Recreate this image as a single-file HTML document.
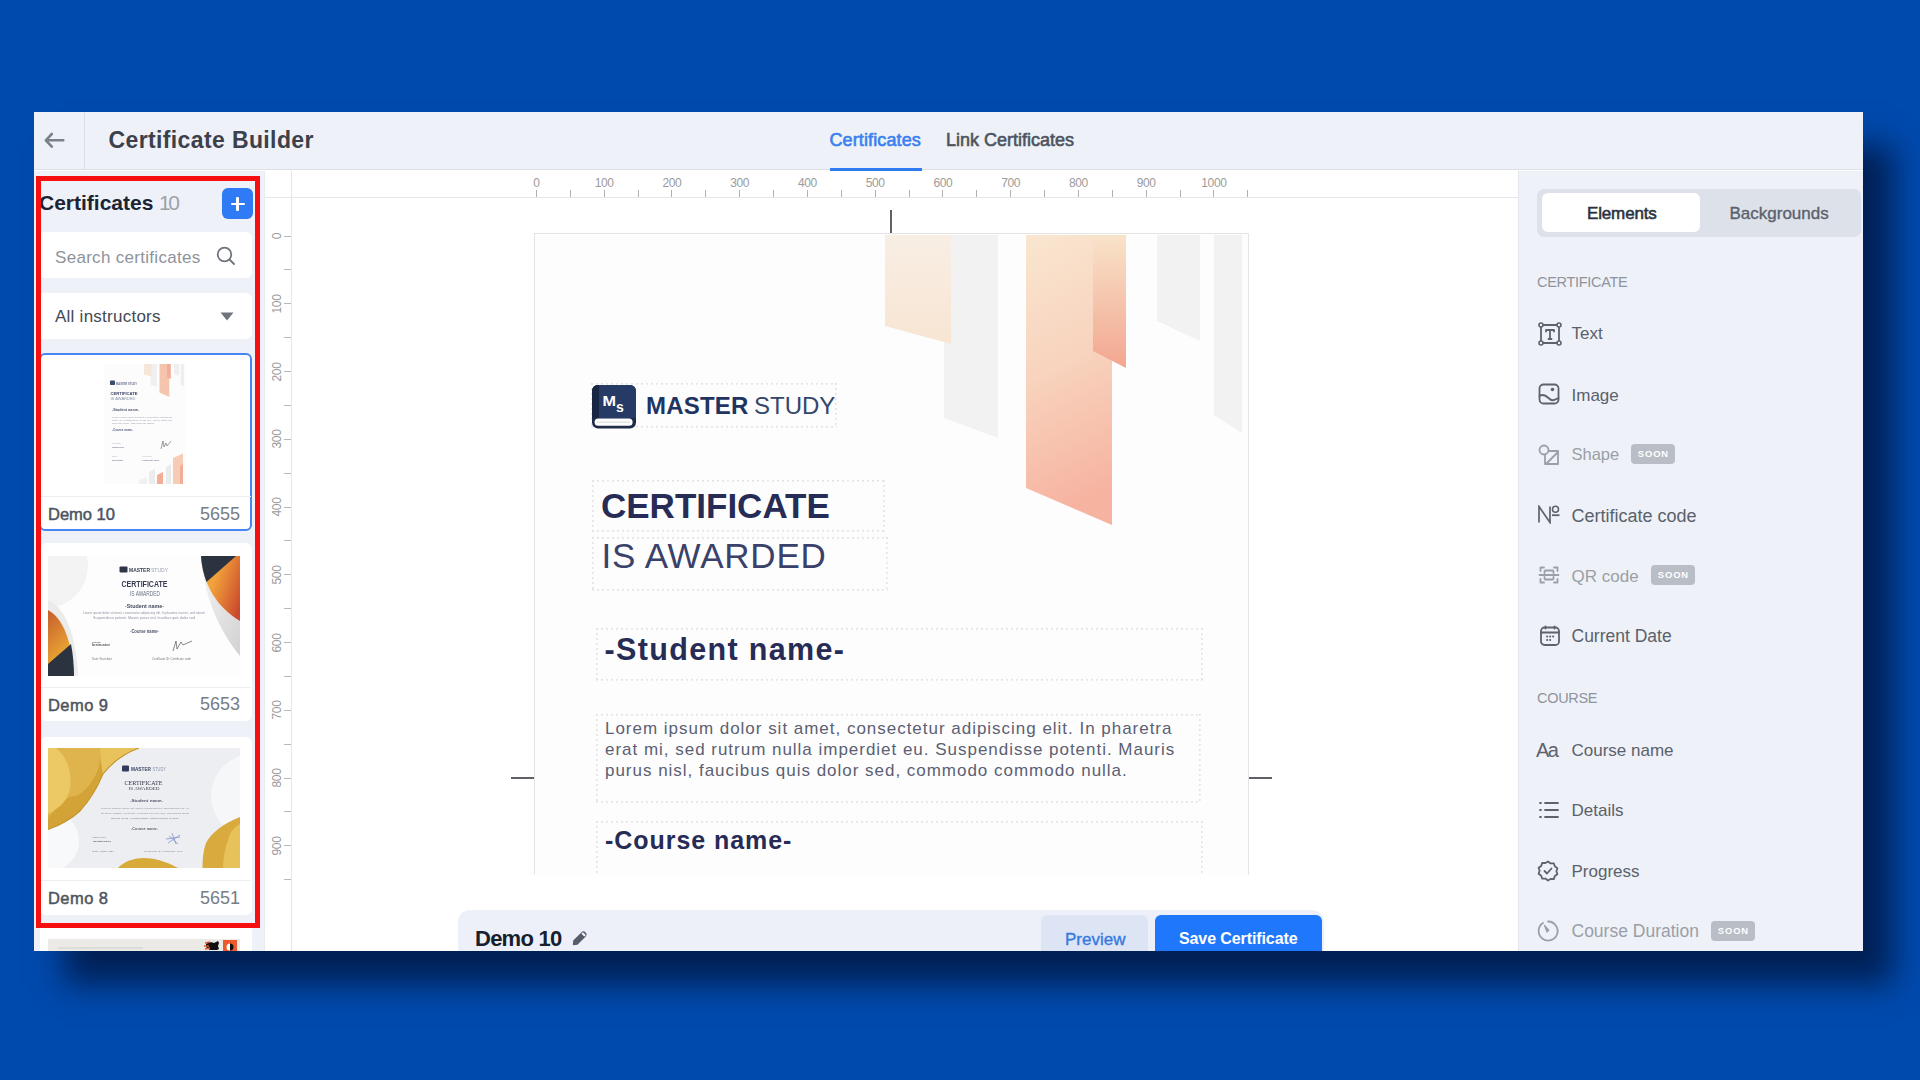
<!DOCTYPE html>
<html><head><meta charset="utf-8">
<style>
*{margin:0;padding:0;box-sizing:border-box}
html,body{width:1920px;height:1080px;overflow:hidden;background:#004aad;font-family:"Liberation Sans",sans-serif}
.abs{position:absolute}
#shadow{position:absolute;left:34px;top:112px;width:1829px;height:839px;box-shadow:30px 33px 30px rgba(0,10,40,0.66)}
#win{position:absolute;left:34px;top:112px;width:1829px;height:839px;overflow:hidden;background:#fff}
#in{position:absolute;left:-34px;top:-112px;width:1920px;height:1080px}
.t{position:absolute;white-space:nowrap;line-height:1}
</style></head><body>
<div id="shadow"></div>
<div id="win"><div id="in">
<div class="abs" style="left:34px;top:112px;width:1829px;height:58px;background:#eef1f8;border-bottom:1px solid #dcdfe6"></div>
<div class="abs" style="left:84px;top:112px;width:1px;height:58px;background:#dcdfe6"></div>
<svg class="abs" style="left:43px;top:131px" width="24" height="18" viewBox="0 0 24 18"><path d="M20.3 9.3H3M8.8 3L2.8 9.3l6 6.3" fill="none" stroke="#7b818a" stroke-width="2.6" stroke-linecap="round" stroke-linejoin="round"/></svg>
<div class="t" style="left:108.5px;top:129.0px;font-size:23px;font-weight:700;color:#3b404b;letter-spacing:0.38px;">Certificate Builder</div>
<div class="t" style="left:829.5px;top:130.5px;font-size:18px;font-weight:400;color:#3a80ef;letter-spacing:0.12px;-webkit-text-stroke:0.6px #3a80ef">Certificates</div>
<div class="abs" style="left:829.5px;top:168px;width:92px;height:2.5px;background:#2f7cf0"></div>
<div class="t" style="left:946px;top:130.5px;font-size:18px;font-weight:400;color:#4d535f;letter-spacing:0px;-webkit-text-stroke:0.6px #4d535f">Link Certificates</div>
<div class="abs" style="left:34px;top:171px;width:230px;height:800px;background:#eef1f8"></div>
<div class="abs" style="left:264px;top:171px;width:1254px;height:800px;background:#fff"></div>
<div class="abs" style="left:264px;top:197px;width:1254px;height:1px;background:#e6e6e8"></div>
<div class="abs" style="left:291px;top:171px;width:1px;height:800px;background:#e6e6e8"></div>
<div class="abs" style="left:264px;top:171px;width:1px;height:800px;background:#e9ebf0"></div>
<div class="abs" style="left:535.9px;top:190px;width:1px;height:7px;background:#b0b0b0"></div>
<div class="t" style="left:506.4px;width:60px;text-align:center;top:176.8px;font-size:12px;color:#9b9b9b;letter-spacing:-0.4px">0</div>
<div class="abs" style="left:569.8px;top:190px;width:1px;height:7px;background:#b0b0b0"></div>
<div class="abs" style="left:603.6px;top:190px;width:1px;height:7px;background:#b0b0b0"></div>
<div class="t" style="left:574.1px;width:60px;text-align:center;top:176.8px;font-size:12px;color:#9b9b9b;letter-spacing:-0.4px">100</div>
<div class="abs" style="left:637.5px;top:190px;width:1px;height:7px;background:#b0b0b0"></div>
<div class="abs" style="left:671.4px;top:190px;width:1px;height:7px;background:#b0b0b0"></div>
<div class="t" style="left:641.9px;width:60px;text-align:center;top:176.8px;font-size:12px;color:#9b9b9b;letter-spacing:-0.4px">200</div>
<div class="abs" style="left:705.3px;top:190px;width:1px;height:7px;background:#b0b0b0"></div>
<div class="abs" style="left:739.1px;top:190px;width:1px;height:7px;background:#b0b0b0"></div>
<div class="t" style="left:709.6px;width:60px;text-align:center;top:176.8px;font-size:12px;color:#9b9b9b;letter-spacing:-0.4px">300</div>
<div class="abs" style="left:773.0px;top:190px;width:1px;height:7px;background:#b0b0b0"></div>
<div class="abs" style="left:806.9px;top:190px;width:1px;height:7px;background:#b0b0b0"></div>
<div class="t" style="left:777.4px;width:60px;text-align:center;top:176.8px;font-size:12px;color:#9b9b9b;letter-spacing:-0.4px">400</div>
<div class="abs" style="left:840.8px;top:190px;width:1px;height:7px;background:#b0b0b0"></div>
<div class="abs" style="left:874.6px;top:190px;width:1px;height:7px;background:#b0b0b0"></div>
<div class="t" style="left:845.1px;width:60px;text-align:center;top:176.8px;font-size:12px;color:#9b9b9b;letter-spacing:-0.4px">500</div>
<div class="abs" style="left:908.5px;top:190px;width:1px;height:7px;background:#b0b0b0"></div>
<div class="abs" style="left:942.4px;top:190px;width:1px;height:7px;background:#b0b0b0"></div>
<div class="t" style="left:912.9px;width:60px;text-align:center;top:176.8px;font-size:12px;color:#9b9b9b;letter-spacing:-0.4px">600</div>
<div class="abs" style="left:976.3px;top:190px;width:1px;height:7px;background:#b0b0b0"></div>
<div class="abs" style="left:1010.1px;top:190px;width:1px;height:7px;background:#b0b0b0"></div>
<div class="t" style="left:980.6px;width:60px;text-align:center;top:176.8px;font-size:12px;color:#9b9b9b;letter-spacing:-0.4px">700</div>
<div class="abs" style="left:1044.0px;top:190px;width:1px;height:7px;background:#b0b0b0"></div>
<div class="abs" style="left:1077.9px;top:190px;width:1px;height:7px;background:#b0b0b0"></div>
<div class="t" style="left:1048.4px;width:60px;text-align:center;top:176.8px;font-size:12px;color:#9b9b9b;letter-spacing:-0.4px">800</div>
<div class="abs" style="left:1111.8px;top:190px;width:1px;height:7px;background:#b0b0b0"></div>
<div class="abs" style="left:1145.7px;top:190px;width:1px;height:7px;background:#b0b0b0"></div>
<div class="t" style="left:1116.2px;width:60px;text-align:center;top:176.8px;font-size:12px;color:#9b9b9b;letter-spacing:-0.4px">900</div>
<div class="abs" style="left:1179.5px;top:190px;width:1px;height:7px;background:#b0b0b0"></div>
<div class="abs" style="left:1213.4px;top:190px;width:1px;height:7px;background:#b0b0b0"></div>
<div class="t" style="left:1183.9px;width:60px;text-align:center;top:176.8px;font-size:12px;color:#9b9b9b;letter-spacing:-0.4px">1000</div>
<div class="abs" style="left:1247.3px;top:190px;width:1px;height:7px;background:#b0b0b0"></div>
<div class="abs" style="left:284px;top:235.5px;width:7px;height:1px;background:#b8b8b8"></div>
<div class="t" style="left:247.3px;top:230.0px;width:60px;height:12px;line-height:12px;text-align:center;font-size:12px;color:#9b9b9b;letter-spacing:-0.4px;transform-origin:30px 6px;transform:rotate(-90deg)">0</div>
<div class="abs" style="left:284px;top:269.4px;width:7px;height:1px;background:#b8b8b8"></div>
<div class="abs" style="left:284px;top:303.2px;width:7px;height:1px;background:#b8b8b8"></div>
<div class="t" style="left:247.3px;top:297.8px;width:60px;height:12px;line-height:12px;text-align:center;font-size:12px;color:#9b9b9b;letter-spacing:-0.4px;transform-origin:30px 6px;transform:rotate(-90deg)">100</div>
<div class="abs" style="left:284px;top:337.1px;width:7px;height:1px;background:#b8b8b8"></div>
<div class="abs" style="left:284px;top:371.0px;width:7px;height:1px;background:#b8b8b8"></div>
<div class="t" style="left:247.3px;top:365.5px;width:60px;height:12px;line-height:12px;text-align:center;font-size:12px;color:#9b9b9b;letter-spacing:-0.4px;transform-origin:30px 6px;transform:rotate(-90deg)">200</div>
<div class="abs" style="left:284px;top:404.9px;width:7px;height:1px;background:#b8b8b8"></div>
<div class="abs" style="left:284px;top:438.8px;width:7px;height:1px;background:#b8b8b8"></div>
<div class="t" style="left:247.3px;top:433.2px;width:60px;height:12px;line-height:12px;text-align:center;font-size:12px;color:#9b9b9b;letter-spacing:-0.4px;transform-origin:30px 6px;transform:rotate(-90deg)">300</div>
<div class="abs" style="left:284px;top:472.6px;width:7px;height:1px;background:#b8b8b8"></div>
<div class="abs" style="left:284px;top:506.5px;width:7px;height:1px;background:#b8b8b8"></div>
<div class="t" style="left:247.3px;top:501.0px;width:60px;height:12px;line-height:12px;text-align:center;font-size:12px;color:#9b9b9b;letter-spacing:-0.4px;transform-origin:30px 6px;transform:rotate(-90deg)">400</div>
<div class="abs" style="left:284px;top:540.4px;width:7px;height:1px;background:#b8b8b8"></div>
<div class="abs" style="left:284px;top:574.2px;width:7px;height:1px;background:#b8b8b8"></div>
<div class="t" style="left:247.3px;top:568.8px;width:60px;height:12px;line-height:12px;text-align:center;font-size:12px;color:#9b9b9b;letter-spacing:-0.4px;transform-origin:30px 6px;transform:rotate(-90deg)">500</div>
<div class="abs" style="left:284px;top:608.1px;width:7px;height:1px;background:#b8b8b8"></div>
<div class="abs" style="left:284px;top:642.0px;width:7px;height:1px;background:#b8b8b8"></div>
<div class="t" style="left:247.3px;top:636.5px;width:60px;height:12px;line-height:12px;text-align:center;font-size:12px;color:#9b9b9b;letter-spacing:-0.4px;transform-origin:30px 6px;transform:rotate(-90deg)">600</div>
<div class="abs" style="left:284px;top:675.9px;width:7px;height:1px;background:#b8b8b8"></div>
<div class="abs" style="left:284px;top:709.8px;width:7px;height:1px;background:#b8b8b8"></div>
<div class="t" style="left:247.3px;top:704.2px;width:60px;height:12px;line-height:12px;text-align:center;font-size:12px;color:#9b9b9b;letter-spacing:-0.4px;transform-origin:30px 6px;transform:rotate(-90deg)">700</div>
<div class="abs" style="left:284px;top:743.6px;width:7px;height:1px;background:#b8b8b8"></div>
<div class="abs" style="left:284px;top:777.5px;width:7px;height:1px;background:#b8b8b8"></div>
<div class="t" style="left:247.3px;top:772.0px;width:60px;height:12px;line-height:12px;text-align:center;font-size:12px;color:#9b9b9b;letter-spacing:-0.4px;transform-origin:30px 6px;transform:rotate(-90deg)">800</div>
<div class="abs" style="left:284px;top:811.4px;width:7px;height:1px;background:#b8b8b8"></div>
<div class="abs" style="left:284px;top:845.2px;width:7px;height:1px;background:#b8b8b8"></div>
<div class="t" style="left:247.3px;top:839.8px;width:60px;height:12px;line-height:12px;text-align:center;font-size:12px;color:#9b9b9b;letter-spacing:-0.4px;transform-origin:30px 6px;transform:rotate(-90deg)">900</div>
<div class="abs" style="left:284px;top:879.1px;width:7px;height:1px;background:#b8b8b8"></div>
<div class="abs" style="left:534px;top:233px;width:715px;height:642px;background:#fdfdfd;border:1px solid #e4e4e4;border-bottom:none;overflow:hidden">
<svg class="abs" style="left:0;top:0" width="715" height="642"><defs><linearGradient id="g1" x1="0" y1="0" x2="0" y2="1"><stop offset="0" stop-color="#f8eee4"/><stop offset="1" stop-color="#f8e5d3"/></linearGradient><linearGradient id="g2" x1="0" y1="0" x2="0.15" y2="1"><stop offset="0" stop-color="#f9e6d0"/><stop offset="0.5" stop-color="#f8d3bd"/><stop offset="1" stop-color="#f6b3a0"/></linearGradient><linearGradient id="g3" x1="0" y1="0" x2="0" y2="1"><stop offset="0" stop-color="#f8e3c9"/><stop offset="1" stop-color="#f3a690"/></linearGradient></defs><polygon points="409.0,1.0 463.0,1.0 463.0,204.0 409.0,184.0" fill="#f2f2f2"/><polygon points="350.0,1.0 416.0,1.0 416.0,110.0 350.0,92.0" fill="url(#g1)"/><polygon points="491.0,1.0 577.0,1.0 577.0,291.0 491.0,254.0" fill="url(#g2)"/><polygon points="558.0,1.0 591.0,1.0 591.0,134.0 558.0,117.0" fill="url(#g3)"/><polygon points="622.0,1.0 665.0,1.0 665.0,107.0 622.0,87.0" fill="#f2f2f2"/><polygon points="679.0,1.0 707.0,1.0 707.0,199.0 679.0,181.0" fill="#f2f2f2"/></svg>
</div>
<div class="abs" style="left:890px;top:210px;width:1.5px;height:23px;background:#5f6166"></div>
<div class="abs" style="left:511px;top:777px;width:23px;height:1.5px;background:#5f6166"></div>
<div class="abs" style="left:1249px;top:777px;width:23px;height:1.5px;background:#5f6166"></div>
<div class="abs" style="left:591px;top:383px;width:246px;height:45px;background:repeating-linear-gradient(90deg,#e3e3e8 0 2px,transparent 2px 5px) left top/100% 1.6px no-repeat,repeating-linear-gradient(90deg,#e3e3e8 0 2px,transparent 2px 5px) left bottom/100% 1.6px no-repeat,repeating-linear-gradient(180deg,#e3e3e8 0 2px,transparent 2px 5px) left top/1.6px 100% no-repeat,repeating-linear-gradient(180deg,#e3e3e8 0 2px,transparent 2px 5px) right top/1.6px 100% no-repeat"></div>
<svg class="abs" style="left:592px;top:384.5px" width="44" height="44" viewBox="0 0 44 44"><rect x="0" y="0" width="44" height="43.5" rx="6" fill="#1f2b48"/><path d="M6 0h32a6 6 0 0 1 6 6v27H0V6a6 6 0 0 1 6-6z" fill="#253a64"/><path d="M6 0h1v33H0V6a6 6 0 0 1 6-6z" fill="#182643"/><rect x="2.6" y="33.5" width="38" height="7.3" rx="3.6" fill="#fdfdfd"/><rect x="5" y="36.6" width="33" height="1.1" fill="#d9dadc"/><text x="10.5" y="21.3" font-family="Liberation Sans" font-weight="700" font-size="15.5" fill="#fff" textLength="13.5" lengthAdjust="spacingAndGlyphs">M</text><text x="24" y="27.3" font-family="Liberation Sans" font-weight="700" font-size="14" fill="#fff">s</text></svg>
<div class="t" style="left:646px;top:394.1px;font-size:24px;font-weight:700;color:#1f3460;letter-spacing:0.2px;">MASTER</div>
<div class="t" style="left:754px;top:394.1px;font-size:24px;font-weight:400;color:#34466a;letter-spacing:0px;">STUDY</div>
<div class="abs" style="left:592px;top:480px;width:293px;height:52px;background:repeating-linear-gradient(90deg,#e3e3e8 0 2px,transparent 2px 5px) left top/100% 1.6px no-repeat,repeating-linear-gradient(90deg,#e3e3e8 0 2px,transparent 2px 5px) left bottom/100% 1.6px no-repeat,repeating-linear-gradient(180deg,#e3e3e8 0 2px,transparent 2px 5px) left top/1.6px 100% no-repeat,repeating-linear-gradient(180deg,#e3e3e8 0 2px,transparent 2px 5px) right top/1.6px 100% no-repeat"></div>
<div class="abs" style="left:592px;top:537px;width:296px;height:54px;background:repeating-linear-gradient(90deg,#e3e3e8 0 2px,transparent 2px 5px) left top/100% 1.6px no-repeat,repeating-linear-gradient(90deg,#e3e3e8 0 2px,transparent 2px 5px) left bottom/100% 1.6px no-repeat,repeating-linear-gradient(180deg,#e3e3e8 0 2px,transparent 2px 5px) left top/1.6px 100% no-repeat,repeating-linear-gradient(180deg,#e3e3e8 0 2px,transparent 2px 5px) right top/1.6px 100% no-repeat"></div>
<div class="t" style="left:601px;top:487.8px;font-size:35px;font-weight:700;color:#262c55;letter-spacing:0px;">CERTIFICATE</div>
<div class="t" style="left:601.5px;top:537.8px;font-size:35px;font-weight:400;color:#3a416a;letter-spacing:0.8px;">IS AWARDED</div>
<div class="abs" style="left:596px;top:628px;width:607px;height:53px;background:repeating-linear-gradient(90deg,#e3e3e8 0 2px,transparent 2px 5px) left top/100% 1.6px no-repeat,repeating-linear-gradient(90deg,#e3e3e8 0 2px,transparent 2px 5px) left bottom/100% 1.6px no-repeat,repeating-linear-gradient(180deg,#e3e3e8 0 2px,transparent 2px 5px) left top/1.6px 100% no-repeat,repeating-linear-gradient(180deg,#e3e3e8 0 2px,transparent 2px 5px) right top/1.6px 100% no-repeat"></div>
<div class="t" style="left:604.5px;top:633.6px;font-size:30.5px;font-weight:700;color:#262c55;letter-spacing:1.35px;">-Student name-</div>
<div class="abs" style="left:596px;top:714px;width:605px;height:89px;background:repeating-linear-gradient(90deg,#e3e3e8 0 2px,transparent 2px 5px) left top/100% 1.6px no-repeat,repeating-linear-gradient(90deg,#e3e3e8 0 2px,transparent 2px 5px) left bottom/100% 1.6px no-repeat,repeating-linear-gradient(180deg,#e3e3e8 0 2px,transparent 2px 5px) left top/1.6px 100% no-repeat,repeating-linear-gradient(180deg,#e3e3e8 0 2px,transparent 2px 5px) right top/1.6px 100% no-repeat"></div>
<div class="t" style="left:605px;top:719.5px;font-size:17px;font-weight:400;color:#5b6073;letter-spacing:0.98px;">Lorem ipsum dolor sit amet, consectetur adipiscing elit. In pharetra</div>
<div class="t" style="left:605px;top:741.0px;font-size:17px;font-weight:400;color:#5b6073;letter-spacing:0.98px;">erat mi, sed rutrum nulla imperdiet eu. Suspendisse potenti. Mauris</div>
<div class="t" style="left:605px;top:762.2px;font-size:17px;font-weight:400;color:#5b6073;letter-spacing:0.98px;">purus nisl, faucibus quis dolor sed, commodo commodo nulla.</div>
<div class="abs" style="left:596px;top:821px;width:607px;height:80px;background:repeating-linear-gradient(90deg,#e3e3e8 0 2px,transparent 2px 5px) left top/100% 1.6px no-repeat,repeating-linear-gradient(90deg,#e3e3e8 0 2px,transparent 2px 5px) left bottom/100% 1.6px no-repeat,repeating-linear-gradient(180deg,#e3e3e8 0 2px,transparent 2px 5px) left top/1.6px 100% no-repeat,repeating-linear-gradient(180deg,#e3e3e8 0 2px,transparent 2px 5px) right top/1.6px 100% no-repeat"></div>
<div class="t" style="left:605px;top:827.5px;font-size:25px;font-weight:700;color:#262c55;letter-spacing:0.95px;">-Course name-</div>
<div class="abs" style="left:500px;top:875px;width:800px;height:40px;background:#fff"></div>
<div class="abs" style="left:458px;top:910px;width:866px;height:80px;background:#edf0f8;border-radius:12px"></div>
<div class="t" style="left:475px;top:928.0px;font-size:22px;font-weight:700;color:#16202e;letter-spacing:-0.75px;">Demo 10</div>
<svg class="abs" style="left:570px;top:930.5px" width="17" height="17" viewBox="0 0 17 17"><g transform="rotate(45 8.5 8.5)"><path d="M5.5 1.5a3 3 0 0 1 6 0V13l-3 3.5-3-3.5z" fill="#575d68"/><rect x="6.3" y="0.2" width="4.4" height="2.2" rx="1" fill="#f3f5fa"/></g></svg>
<div class="abs" style="left:1041px;top:915px;width:107px;height:60px;background:#dde5f5;border-radius:6px"></div>
<div class="t" style="left:1065px;top:930.5px;font-size:17px;font-weight:400;color:#3579e0;letter-spacing:0px;-webkit-text-stroke:0.35px #3579e0">Preview</div>
<div class="abs" style="left:1155px;top:914.5px;width:167px;height:60px;background:#1f78fb;border-radius:6px"></div>
<div class="t" style="left:1179px;top:931.4px;font-size:16px;font-weight:700;color:#ffffff;letter-spacing:-0.1px;">Save Certificate</div>
<div class="abs" style="left:1518px;top:171px;width:345px;height:800px;background:#eef1f8;border-left:1px solid #e4e7ee"></div>
<div class="abs" style="left:1537px;top:188.5px;width:324px;height:48px;background:#dde1ea;border-radius:7px"></div>
<div class="abs" style="left:1542px;top:193px;width:157.5px;height:39px;background:#fff;border-radius:6px"></div>
<div class="t" style="left:1587px;top:204.5px;font-size:17px;font-weight:400;color:#2b3140;letter-spacing:0px;-webkit-text-stroke:0.55px #2b3140;letter-spacing:-0.15px">Elements</div>
<div class="t" style="left:1729.5px;top:204.5px;font-size:17px;font-weight:400;color:#5a616d;letter-spacing:0px;-webkit-text-stroke:0.35px #5a616d">Backgrounds</div>
<div class="t" style="left:1537px;top:275.4px;font-size:14.5px;font-weight:400;color:#8f949c;letter-spacing:-0.3px;">CERTIFICATE</div>
<div class="t" style="left:1537px;top:690.6px;font-size:14.5px;font-weight:400;color:#8f949c;letter-spacing:-0.3px;">COURSE</div>
<div class="t" style="left:1571.5px;top:324.6px;font-size:17px;font-weight:400;color:#5b616b;letter-spacing:0px;">Text</div>
<div class="t" style="left:1571.5px;top:386.8px;font-size:17px;font-weight:400;color:#5b616b;letter-spacing:0px;">Image</div>
<div class="t" style="left:1571.5px;top:446.3px;font-size:16.5px;font-weight:400;color:#9a9fa6;letter-spacing:0px;">Shape</div>
<div class="t" style="left:1571.5px;top:507.3px;font-size:18px;font-weight:400;color:#5b616b;letter-spacing:0px;">Certificate code</div>
<div class="t" style="left:1571.5px;top:568.3px;font-size:17px;font-weight:400;color:#9a9fa6;letter-spacing:0px;">QR code</div>
<div class="t" style="left:1571.5px;top:627.9px;font-size:17.5px;font-weight:400;color:#5b616b;letter-spacing:0px;">Current Date</div>
<div class="t" style="left:1571.5px;top:742.1px;font-size:17px;font-weight:400;color:#5b616b;letter-spacing:0px;">Course name</div>
<div class="t" style="left:1571.5px;top:801.5px;font-size:17px;font-weight:400;color:#5b616b;letter-spacing:0px;">Details</div>
<div class="t" style="left:1571.5px;top:863.0px;font-size:17px;font-weight:400;color:#5b616b;letter-spacing:0px;">Progress</div>
<div class="t" style="left:1571.5px;top:922.6px;font-size:17.5px;font-weight:400;color:#9a9fa6;letter-spacing:0px;">Course Duration</div>
<div class="abs" style="left:1631px;top:444px;width:44px;height:20px;background:#b9bdc5;border-radius:4px;color:#fff;font-size:9.4px;font-weight:700;line-height:20.3px;text-align:center;letter-spacing:0.9px;padding-left:0.9px">SOON</div>
<div class="abs" style="left:1651px;top:565px;width:44px;height:20px;background:#b9bdc5;border-radius:4px;color:#fff;font-size:9.4px;font-weight:700;line-height:20.3px;text-align:center;letter-spacing:0.9px;padding-left:0.9px">SOON</div>
<div class="abs" style="left:1711px;top:921px;width:44px;height:20px;background:#b9bdc5;border-radius:4px;color:#fff;font-size:9.4px;font-weight:700;line-height:20.3px;text-align:center;letter-spacing:0.9px;padding-left:0.9px">SOON</div>
<svg class="abs" style="left:1537.5px;top:321.5px" width="24" height="24" viewBox="0 0 24 24"><rect x="3" y="3" width="18" height="18" fill="none" stroke="#5d636d" stroke-width="1.8" stroke-linecap="round" stroke-linejoin="round"/><circle cx="3" cy="3" r="2" fill="#eef1f8" stroke="#5d636d" stroke-width="1.6"/><circle cx="21" cy="3" r="2" fill="#eef1f8" stroke="#5d636d" stroke-width="1.6"/><circle cx="3" cy="21" r="2" fill="#eef1f8" stroke="#5d636d" stroke-width="1.6"/><circle cx="21" cy="21" r="2" fill="#eef1f8" stroke="#5d636d" stroke-width="1.6"/><path d="M8 8h8M12 8v9M10.5 17h3M8 8v1.5M16 8v1.5" fill="none" stroke="#5d636d" stroke-width="1.8" stroke-linecap="round" stroke-linejoin="round"/></svg>
<svg class="abs" style="left:1537px;top:382px" width="24" height="24" viewBox="0 0 24 24"><rect x="2.5" y="2.5" width="19" height="19" rx="4" fill="none" stroke="#5d636d" stroke-width="1.8" stroke-linecap="round" stroke-linejoin="round"/><path d="M2.5 14c3-2 6-1 9 2s5 3 10 0" fill="none" stroke="#5d636d" stroke-width="1.8" stroke-linecap="round" stroke-linejoin="round"/><circle cx="15.5" cy="7.5" r="1.8" fill="#5d636d"/></svg>
<svg class="abs" style="left:1537px;top:443px" width="24" height="24" viewBox="0 0 24 24"><circle cx="7" cy="7" r="4.5" fill="none" stroke="#9aa0a7" stroke-width="1.8" stroke-linecap="round" stroke-linejoin="round"/><path d="M12 8l9 0 0 13-13 0 0-9" fill="none" stroke="#9aa0a7" stroke-width="1.8" stroke-linecap="round" stroke-linejoin="round"/><path d="M9 21l12-12" fill="none" stroke="#9aa0a7" stroke-width="1.8" stroke-linecap="round" stroke-linejoin="round"/></svg>
<svg class="abs" style="left:1537px;top:505px" width="24" height="19" viewBox="0 0 24 19"><path d="M2 17.5V1.5l11 16V1.5" fill="none" stroke="#5d636d" stroke-width="1.7" stroke-linejoin="miter"/><circle cx="18.5" cy="4.3" r="3" fill="none" stroke="#5d636d" stroke-width="1.6"/><rect x="15" y="9.3" width="7.5" height="1.8" fill="#5d636d"/></svg>
<svg class="abs" style="left:1537px;top:563px" width="24" height="24" viewBox="0 0 24 24"><path d="M3.5 8V4.5h3.5M17 4.5h3.5V8M20.5 16v3.5H17M7 19.5H3.5V16M2.5 12h19M7.5 10V8.5a1 1 0 0 1 1-1h7a1 1 0 0 1 1 1V10M7.5 14v1.5a1 1 0 0 0 1 1h7a1 1 0 0 0 1-1V14" fill="none" stroke="#9aa0a7" stroke-width="1.8" stroke-linecap="round" stroke-linejoin="round"/></svg>
<svg class="abs" style="left:1537.5px;top:624px" width="24" height="24" viewBox="0 0 24 24"><rect x="3" y="3.5" width="18" height="17.5" rx="3.5" fill="none" stroke="#5d636d" stroke-width="1.8" stroke-linecap="round" stroke-linejoin="round"/><path d="M3 8.5h18M7.5 2.5v2M16.5 2.5v2" fill="none" stroke="#5d636d" stroke-width="1.8" stroke-linecap="round" stroke-linejoin="round"/><path d="M9 12.5h.3M12 12.5h.3M15 12.5h.3M9 16h.3M12 16h.3" fill="none" stroke="#5d636d" stroke-width="1.8" stroke-linecap="round" stroke-linejoin="round"/></svg>
<div class="t" style="left:1536px;top:740.0px;font-size:20px;font-weight:400;color:#5d636d;letter-spacing:-1.5px;">Aa</div>
<svg class="abs" style="left:1537px;top:798px" width="24" height="24" viewBox="0 0 24 24"><path d="M8 5h13M8 12h13M8 19h13M3 5h1M3 12h1M3 19h1" fill="none" stroke="#5d636d" stroke-width="1.8" stroke-linecap="round" stroke-linejoin="round"/></svg>
<svg class="abs" style="left:1536px;top:859px" width="24" height="24" viewBox="0 0 24 24"><path d="M12 2.5l2.6 1.9 3.2-.1 1 3 2.6 1.9-1 3 1 3-2.6 1.9-1 3-3.2-.1L12 21.5l-2.6-1.9-3.2.1-1-3L2.6 14.8l1-3-1-3 2.6-1.9 1-3 3.2.1z" fill="none" stroke="#5d636d" stroke-width="1.8" stroke-linecap="round" stroke-linejoin="round"/><path d="M8.5 12l2.5 2.5 4.5-5" fill="none" stroke="#5d636d" stroke-width="1.8" stroke-linecap="round" stroke-linejoin="round"/></svg>
<svg class="abs" style="left:1536px;top:919px" width="24" height="24" viewBox="0 0 24 24"><path d="M7 4A9.5 9.5 0 1 0 12 2.5" fill="none" stroke="#9aa0a7" stroke-width="1.8" stroke-linecap="round" stroke-linejoin="round"/><path d="M12.8 11.2L8.5 6.5 11 13z" fill="#9aa0a7" stroke="#9aa0a7" stroke-width="1.2" stroke-linejoin="round"/></svg>
<div class="t" style="left:39px;top:192.2px;font-size:21px;font-weight:700;color:#1c2434;letter-spacing:0px;">Certificates</div>
<div class="t" style="left:159px;top:192.2px;font-size:21px;font-weight:400;color:#9ca1a9;letter-spacing:-2.5px;">10</div>
<div class="abs" style="left:222px;top:188px;width:31px;height:31px;background:#2f7bf5;border-radius:6px"></div>
<div class="abs" style="left:230.5px;top:202.5px;width:14px;height:2.6px;background:#fff;border-radius:1px"></div>
<div class="abs" style="left:236.2px;top:196.8px;width:2.6px;height:14px;background:#fff;border-radius:1px"></div>
<div class="abs" style="left:38px;top:232px;width:214px;height:46px;background:#fff;border-radius:6px"></div>
<div class="t" style="left:55px;top:248.8px;font-size:17px;font-weight:400;color:#8e939b;letter-spacing:0.3px;">Search certificates</div>
<svg class="abs" style="left:216px;top:246px" width="20" height="20" viewBox="0 0 20 20"><circle cx="8.5" cy="8.5" r="6.8" fill="none" stroke="#6f757d" stroke-width="1.8"/><path d="M13.5 13.5l4.5 4.5" stroke="#6f757d" stroke-width="1.8" stroke-linecap="round"/></svg>
<div class="abs" style="left:38px;top:293px;width:214px;height:46px;background:#fff;border-radius:6px"></div>
<div class="t" style="left:55px;top:308.1px;font-size:17px;font-weight:400;color:#434955;letter-spacing:0.25px;">All instructors</div>
<svg class="abs" style="left:220px;top:312px" width="14" height="9" viewBox="0 0 14 9"><path d="M0.5 0.5h13L7 8.5z" fill="#6f757d"/></svg>
<div class="abs" style="left:39px;top:352.5px;width:213px;height:178px;background:#fff;border:2px solid #4586f3;border-radius:6px"></div>
<div class="abs" style="left:41px;top:496.0px;width:210px;height:1px;background:#eceef3"></div>
<svg class="abs" style="left:103.5px;top:364px;filter:blur(0.25px)" width="82" height="120" viewBox="0 0 82 120"><rect width="82" height="120" fill="#fcfcfc"/><polygon points="46.5,0 53,0 53,23 46.5,21" fill="#f0f0f0"/><polygon points="40,0 47.5,0 47.5,12.5 40,10.5" fill="#f5e6d8"/><polygon points="55.5,0 65.3,0 65.3,33 55.5,28.5" fill="#f5c4ac"/><polygon points="63,0 66.8,0 66.8,15 63,13" fill="#f2ad98"/><polygon points="70,0 75,0 75,12 70,10" fill="#efefef"/><polygon points="76.5,0 80,0 80,22.5 76.5,20.5" fill="#efefef"/><rect x="6" y="16.5" width="5" height="4.5" rx="0.8" fill="#3b4a6e"/><text x="12" y="20.6" font-family="Liberation Sans" font-size="3.6" font-weight="700" fill="#6d7590" textLength="21" lengthAdjust="spacingAndGlyphs">MASTER STUDY</text><text x="6.5" y="31" font-family="Liberation Sans" font-size="4" font-weight="700" fill="#3c4163" textLength="27" lengthAdjust="spacingAndGlyphs">CERTIFICATE</text><text x="6.5" y="36" font-family="Liberation Sans" font-size="3.8" font-weight="400" fill="#8a8fa8" textLength="25" lengthAdjust="spacingAndGlyphs">IS AWARDED</text><text x="8" y="46.5" font-family="Liberation Sans" font-size="3.6" font-weight="700" fill="#4d5270" textLength="27" lengthAdjust="spacingAndGlyphs">-Student name-</text><text x="8" y="54.4" font-family="Liberation Sans" font-size="1.8" font-weight="400" fill="#9ea1b0" textLength="60" lengthAdjust="spacingAndGlyphs">Lorem ipsum dolor sit amet, consectetur adipiscing</text><text x="8" y="57.4" font-family="Liberation Sans" font-size="1.8" font-weight="400" fill="#9ea1b0" textLength="60" lengthAdjust="spacingAndGlyphs"> elit. In pharetra erat mi, sed rutrum</text><text x="8" y="60.4" font-family="Liberation Sans" font-size="1.8" font-weight="400" fill="#9ea1b0" textLength="42" lengthAdjust="spacingAndGlyphs">purus nisl, faucibus quis</text><text x="8" y="67" font-family="Liberation Sans" font-size="2.9" font-weight="700" fill="#5d6280" textLength="21" lengthAdjust="spacingAndGlyphs">-Course name-</text><text x="8" y="80.3" font-family="Liberation Sans" font-size="1.6" font-weight="400" fill="#b5b8c4" textLength="9" lengthAdjust="spacingAndGlyphs">Instructor</text><text x="8" y="84" font-family="Liberation Sans" font-size="2.1" font-weight="700" fill="#7d8196" textLength="12" lengthAdjust="spacingAndGlyphs">Instructor</text><path d="M57 85l2-8 1 6 2-4 1 3 4-5" stroke="#777" stroke-width="0.7" fill="none"/><text x="8" y="93.3" font-family="Liberation Sans" font-size="1.6" font-weight="400" fill="#b5b8c4" textLength="6" lengthAdjust="spacingAndGlyphs">Date</text><text x="8" y="96.6" font-family="Liberation Sans" font-size="2.1" font-weight="700" fill="#7d8196" textLength="11" lengthAdjust="spacingAndGlyphs">Start date</text><text x="38" y="93.3" font-family="Liberation Sans" font-size="1.6" font-weight="400" fill="#b5b8c4" textLength="10" lengthAdjust="spacingAndGlyphs">Certificate ID</text><text x="38" y="96.6" font-family="Liberation Sans" font-size="2.1" font-weight="700" fill="#7d8196" textLength="17" lengthAdjust="spacingAndGlyphs">Certificate code</text><polygon points="35,120 43,120 43,113 35,116" fill="#f1f1f1"/><polygon points="45,120 51,120 51,105 45,108" fill="#ececec"/><polygon points="53,120 59,120 59,108 53,111" fill="#f4ae98"/><polygon points="62,120 67,120 67,100 62,103" fill="#ebebeb"/><polygon points="69,120 79,120 79,89.5 69,94" fill="#f6ccb5"/><polygon points="76,120 79,120 79,100 76,102" fill="#f2ad97"/></svg>
<div class="t" style="left:48px;top:506.0px;font-size:16.5px;font-weight:400;color:#4d5461;letter-spacing:0px;-webkit-text-stroke:0.5px #4d5461">Demo 10</div>
<div class="t" style="left:140px;width:100px;text-align:right;top:504.5px;font-size:18px;color:#787d85">5655</div>
<div class="abs" style="left:40px;top:543px;width:212px;height:178px;background:#fff;border-radius:6px"></div>
<div class="abs" style="left:41px;top:686.5px;width:210px;height:1px;background:#eceef3"></div>
<svg class="abs" style="left:48px;top:556px;filter:blur(0.25px)" width="192" height="120" viewBox="0 0 192 120"><defs><linearGradient id="o1" x1="0.2" y1="0.6" x2="0.9" y2="1"><stop offset="0" stop-color="#f2a23a"/><stop offset="1" stop-color="#c9472c"/></linearGradient><linearGradient id="o2" x1="0" y1="0" x2="0.4" y2="1"><stop offset="0" stop-color="#c65c2e"/><stop offset="1" stop-color="#f3b934"/></linearGradient><linearGradient id="gr" x1="0" y1="0" x2="1" y2="1"><stop offset="0" stop-color="#f6f6f6"/><stop offset="1" stop-color="#d2d2d2"/></linearGradient></defs><rect width="192" height="120" fill="#fdfdfd"/><circle cx="-2" cy="10" r="42" fill="#f3f3f3"/><path d="M0 44C18 52 28 80 30 120H26C24 85 15 62 0 54Z" fill="#ebebeb"/><path d="M0 54C15 62 24 85 26 120H0Z" fill="url(#o2)"/><path d="M0 108L23 88C25 98 26 110 26 120H0Z" fill="#2b3240"/><path d="M153 5C158 45 172 75 192 100V65C170 52 157 32 153 0Z" fill="url(#gr)"/><path d="M153 0C155 30 170 52 192 65V0Z" fill="url(#o1)"/><path d="M153 0H188L158.5 26C155.5 18 153.5 9 153 0Z" fill="#2b3240"/><rect x="71.5" y="10.5" width="8" height="6" rx="1" fill="#2f3547"/><text x="81" y="15.5" font-family="Liberation Sans" font-size="5" font-weight="700" fill="#3c4256" textLength="21" lengthAdjust="spacingAndGlyphs">MASTER</text><text x="103" y="15.5" font-family="Liberation Sans" font-size="5" font-weight="400" fill="#9aa0b0" textLength="17" lengthAdjust="spacingAndGlyphs">STUDY</text><text x="73.5" y="31" font-family="Liberation Sans" font-size="9.5" font-weight="700" fill="#363b52" textLength="46" lengthAdjust="spacingAndGlyphs">CERTIFICATE</text><text x="82" y="39.5" font-family="Liberation Sans" font-size="7.5" font-weight="400" fill="#6c7188" textLength="30" lengthAdjust="spacingAndGlyphs">IS AWARDED</text><text x="77" y="51.5" font-family="Liberation Sans" font-size="5.5" font-weight="700" fill="#444a60" textLength="39" lengthAdjust="spacingAndGlyphs">-Student name-</text><text x="35" y="58.2" font-family="Liberation Sans" font-size="2.6" font-weight="400" fill="#8f93a3" textLength="122" lengthAdjust="spacingAndGlyphs">Lorem ipsum dolor sit amet, consectetur adipiscing elit. In pharetra erat mi, sed rutrum</text><text x="45" y="62.7" font-family="Liberation Sans" font-size="2.6" font-weight="400" fill="#8f93a3" textLength="102" lengthAdjust="spacingAndGlyphs">Suspendisse potenti. Mauris purus nisl, faucibus quis dolor sed</text><text x="82" y="77" font-family="Liberation Sans" font-size="5" font-weight="700" fill="#4d5268" textLength="29" lengthAdjust="spacingAndGlyphs">-Course name-</text><text x="44" y="86.5" font-family="Liberation Sans" font-size="2.2" font-weight="400" fill="#333" textLength="9" lengthAdjust="spacingAndGlyphs">Instructor</text><text x="44" y="90" font-family="Liberation Sans" font-size="2.8" font-weight="700" fill="#555" textLength="18" lengthAdjust="spacingAndGlyphs">Instructor</text><text x="44" y="103.5" font-family="Liberation Sans" font-size="2.6" font-weight="400" fill="#777" textLength="20" lengthAdjust="spacingAndGlyphs">Date: Start date</text><text x="104" y="103.5" font-family="Liberation Sans" font-size="2.6" font-weight="400" fill="#777" textLength="39" lengthAdjust="spacingAndGlyphs">Certificate ID: Certificate code</text><path d="M125 95l3-10 1 8 4-7 2 3 9-4" stroke="#555" stroke-width="0.7" fill="none"/></svg>
<div class="t" style="left:48px;top:696.5px;font-size:16.5px;font-weight:400;color:#4d5461;letter-spacing:0.45px;-webkit-text-stroke:0.5px #4d5461">Demo 9</div>
<div class="t" style="left:140px;width:100px;text-align:right;top:695.0px;font-size:18px;color:#787d85">5653</div>
<div class="abs" style="left:40px;top:736.5px;width:212px;height:178px;background:#fff;border-radius:6px"></div>
<div class="abs" style="left:41px;top:880.0px;width:210px;height:1px;background:#eceef3"></div>
<svg class="abs" style="left:48px;top:747.5px;filter:blur(0.25px)" width="192" height="120" viewBox="0 0 192 120"><defs><linearGradient id="y1" x1="0" y1="0" x2="1" y2="1"><stop offset="0" stop-color="#ebc963"/><stop offset="1" stop-color="#c9992c"/></linearGradient><linearGradient id="y2" x1="0" y1="1" x2="1" y2="0"><stop offset="0" stop-color="#d4a432"/><stop offset="1" stop-color="#ecc863"/></linearGradient></defs><rect width="192" height="120" fill="#eceef2"/><circle cx="205" cy="48" r="42" fill="#f6f7f9"/><circle cx="1" cy="93" r="30" fill="#f8f9fb"/><path d="M0 0H91C80 4 66 12 55 26C50 38 42 52 32 63C22 72 10 78 0 81.5Z" fill="#d3a338"/><path d="M52 0H91C80 4 66 12 55 26C53 16 52 8 52 0Z" fill="#e8c35c"/><path d="M6 0H52C54 12 50 26 42 36C36 44 30 48 26 48C18 48 10 58 0 70Z" fill="#e0b44c"/><path d="M0 0H8C20 10 24 25 22 40C20 52 12 60 0 66Z" fill="#ecc964"/><path d="M91 0C80 4 66 12 55 26C50 38 42 52 32 63C22 72 10 78 0 81.5" fill="none" stroke="#c4952d" stroke-width="1.1"/><path d="M192 69C176 75 163 85 158 95C155 103 154.5 112 154.5 120H192Z" fill="#d9aa3e"/><path d="M192 76C185 80 181 86 180 92C177 100 175 110 175 120H192Z" fill="#e7c15a"/><path d="M70 120C80 110 100 104 130 120Z" fill="#d8aa3a"/><rect x="74" y="17.5" width="7" height="6" rx="1" fill="#2f3a5e"/><text x="83" y="22.6" font-family="Liberation Sans" font-size="4.5" font-weight="700" fill="#3d4460" textLength="20" lengthAdjust="spacingAndGlyphs">MASTER</text><text x="104.5" y="22.6" font-family="Liberation Sans" font-size="4.5" font-weight="400" fill="#8d94aa" textLength="13.5" lengthAdjust="spacingAndGlyphs">STUDY</text><g font-family="Liberation Serif"><text x="76.5" y="36.5" font-size="6" font-weight="400" fill="#33364c" textLength="38" lengthAdjust="spacingAndGlyphs">CERTIFICATE</text><text x="80.6" y="41.9" font-size="5" font-weight="400" fill="#44485c" textLength="31" lengthAdjust="spacingAndGlyphs">IS AWARDED</text></g><text x="82" y="54" font-family="Liberation Sans" font-size="4" font-weight="700" fill="#555a6c" textLength="33" lengthAdjust="spacingAndGlyphs">-Student name-</text><text x="53" y="61" font-family="Liberation Sans" font-size="2.3" font-weight="400" fill="#8d919e" textLength="88" lengthAdjust="spacingAndGlyphs">Lorem ipsum dolor sit amet, consectetur adipiscing elit. In </text><text x="53" y="66" font-family="Liberation Sans" font-size="2.3" font-weight="400" fill="#8d919e" textLength="88" lengthAdjust="spacingAndGlyphs">Suspendisse potenti. Mauris purus nisl, faucibus quis</text><text x="63" y="70.5" font-family="Liberation Sans" font-size="2.3" font-weight="400" fill="#777b88" textLength="68" lengthAdjust="spacingAndGlyphs">dolor sed, commodo commodo nulla.</text><text x="83" y="82" font-family="Liberation Sans" font-size="3.8" font-weight="700" fill="#5f6474" textLength="27" lengthAdjust="spacingAndGlyphs">-Course name-</text><text x="44" y="89.5" font-family="Liberation Sans" font-size="2.2" font-weight="400" fill="#888" textLength="14" lengthAdjust="spacingAndGlyphs">Instructor</text><text x="45" y="93.8" font-family="Liberation Sans" font-size="2.5" font-weight="700" fill="#666" textLength="18" lengthAdjust="spacingAndGlyphs">Instructor</text><text x="44" y="104" font-family="Liberation Sans" font-size="2.2" font-weight="400" fill="#888" textLength="22" lengthAdjust="spacingAndGlyphs">Date: Start date</text><text x="96" y="104" font-family="Liberation Sans" font-size="2.2" font-weight="400" fill="#888" textLength="39" lengthAdjust="spacingAndGlyphs">Certificate ID: Certificate code</text><path d="M120 95l12-8M121 88l9 8M124 85l4 11M118 91l14-2" stroke="#8595cc" stroke-width="0.8" fill="none"/></svg>
<div class="t" style="left:48px;top:890.0px;font-size:16.5px;font-weight:400;color:#4d5461;letter-spacing:0.45px;-webkit-text-stroke:0.5px #4d5461">Demo 8</div>
<div class="t" style="left:140px;width:100px;text-align:right;top:888.5px;font-size:18px;color:#787d85">5651</div>
<div class="abs" style="left:40px;top:925px;width:212px;height:60px;background:#fff;border-radius:6px"></div>
<div class="abs" style="left:48px;top:939px;width:192px;height:20px;background:#ebeae6"></div>
<div class="abs" style="left:58px;top:947px;width:85px;height:1.5px;background:#dcdcda"></div>
<svg class="abs" style="left:204px;top:940px" width="36" height="14" viewBox="0 0 36 14"><path d="M2 4c3-2 6-2 8-1l4-2 1 2-1 3 1 3-2 1H6c-2-1-3-2-4-3z" fill="#111"/><path d="M1 3l5-1M0 6l5 0M1 9l5-1" stroke="#e8572c" stroke-width="1.3"/><rect x="19" y="0" width="14" height="14" fill="#ee5a2b"/><path d="M26 3.5a3.5 3.5 0 0 1 0 7z" fill="#111"/><path d="M26 3.5a3.5 3.5 0 0 0 0 7z" fill="#fff"/></svg>
<div class="abs" style="left:36px;top:176.3px;width:224.3px;height:751.5px;border:5.3px solid #f50f10"></div>
</div></div>
</body></html>
